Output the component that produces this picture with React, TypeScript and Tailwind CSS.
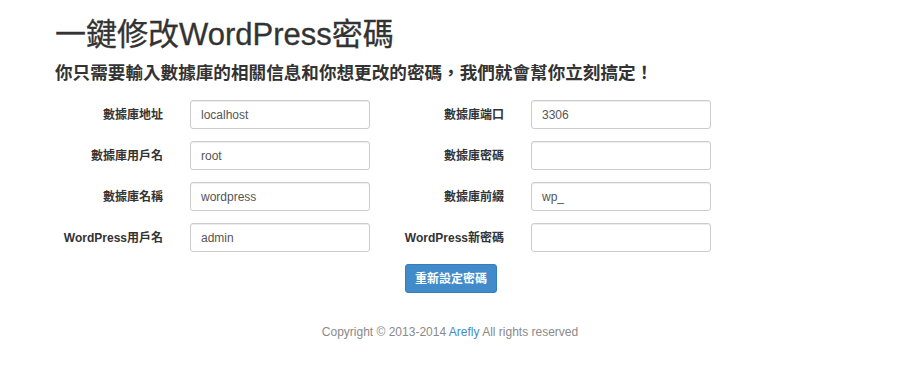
import React from "react";

const font = { fontFamily: '"Liberation Sans", "Noto Sans CJK TC", sans-serif' };

function Field({ label, value }: { label: string; value: string }) {
  return (
    <div className="flex items-center w-[341px]">
      <label className="w-[108px] text-right text-[12px] font-bold text-[#333] leading-none">{label}</label>
      <input
        readOnly
        value={value}
        className="ml-[27px] w-[180px] h-[29px] px-[10px] text-[12px] text-[#555] bg-white border border-[#ccc] rounded-[3px] shadow-[inset_0_1px_1px_rgba(0,0,0,0.075)] outline-none"
        style={font}
      />
    </div>
  );
}

export default function App() {
  const rows: [string, string, string, string][] = [
    ["數據庫地址", "localhost", "數據庫端口", "3306"],
    ["數據庫用戶名", "root", "數據庫密碼", ""],
    ["數據庫名稱", "wordpress", "數據庫前綴", "wp_"],
    ["WordPress用戶名", "admin", "WordPress新密碼", ""],
  ];
  return (
    <div className="w-[900px] h-[386px] bg-white text-[#333]" style={font}>
      <div className="pl-[55px] pt-[18px]">
        <h1 className="text-[31px] leading-[34px] font-normal text-[#333] [-webkit-text-stroke:0.3px_#333]">一鍵修改WordPress密碼</h1>
        <h4 className="mt-[11px] text-[17.6px] leading-[20px] font-bold text-[#333]">
          你只需要輸入數據庫的相關信息和你想更改的密碼，我們就會幫你立刻搞定！
        </h4>
      </div>
      <div className="mt-[17px] pl-[55px] flex flex-col gap-[12px]">
        {rows.map((r, i) => (
          <div key={i} className="flex">
            <Field label={r[0]} value={r[1]} />
            <Field label={r[2]} value={r[3]} />
          </div>
        ))}
      </div>
      <div className="mt-[12px] flex justify-center">
        <button
          className="ml-[2px] h-[29px] px-[9px] text-[12px] font-bold text-white bg-[#428bca] border border-[#357ebd] rounded-[3px]"
          style={font}
        >
          重新設定密碼
        </button>
      </div>
      <div className="mt-[30px] text-center text-[12px] text-[#8a8a8a]">
        Copyright © 2013-2014 <span className="text-[#428bca]">Arefly</span> All rights reserved
      </div>
    </div>
  );
}
